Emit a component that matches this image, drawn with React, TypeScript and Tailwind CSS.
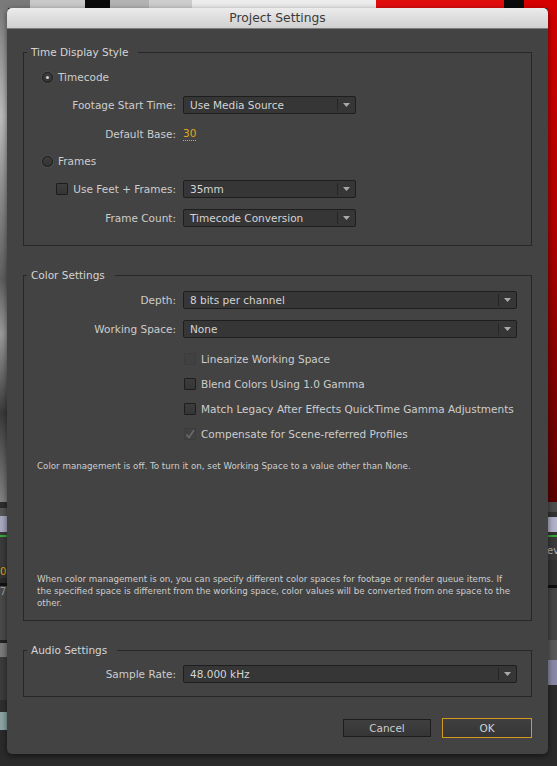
import type { ReactNode } from "react"

const label = "text-[10.5px] leading-[14px] text-[#cdcdcd]"
const small = "text-[8.7px] leading-[12px] text-[#cdcdcd]"

const topStrip = [
  { w: "w-[30px]", c: "bg-[#7a7a7a]" },
  { w: "w-[55px]", c: "bg-[#c9c9c9]" },
  { w: "w-[25px]", c: "bg-[#0b0b0b]" },
  { w: "w-[39px]", c: "bg-[#b3b3b3]" },
  { w: "w-[43px]", c: "bg-[#cdcdcd]" },
  { w: "w-[184px]", c: "bg-[#ececec]" },
  { w: "w-[128px]", c: "bg-[#e00d0d]" },
  { w: "w-[20px]", c: "bg-[#0b0b0b]" },
  { w: "flex-1", c: "bg-[#d60000]" },
]

const leftBands = [
  { h: "h-[494px]", c: "bg-[linear-gradient(180deg,#7c7c7c_0%,#bdbdbd_22%,#8c8c8c_38%,#5e5e5e_55%,#9b9b9b_66%,#3a3a3a_82%,#828282_100%)]" },
  { h: "h-[6px]", c: "bg-[#2e2e2e]" },
  { h: "h-[8px]", c: "bg-[#565656]" },
  { h: "h-[16px]", c: "bg-[#a9a9c1]" },
  { h: "h-[3px]", c: "bg-[#3a3a3a]" },
  { h: "h-[2px]", c: "bg-[#3aa63a]" },
  { h: "h-[29px]", c: "bg-[#3b3b3b]" },
  { h: "h-[12px]", c: "bg-[#353535]", t: "0", tc: "text-[#e0a51c]" },
  { h: "h-[5px]", c: "bg-[#2a2a2a]" },
  { h: "h-[3px]", c: "bg-[#111111]" },
  { h: "h-[54px]", c: "bg-[#4a4a4a]", t: "7", tc: "text-[#a0a0a0]" },
  { h: "h-[3px]", c: "bg-[#222222]" },
  { h: "h-[14px]", c: "bg-[#7b7b7b]" },
  { h: "h-[43px]", c: "bg-[#3c3c3c]" },
  { h: "h-[12px]", c: "bg-[#2f2f2f]" },
  { h: "h-[18px]", c: "bg-[#8ea5a5]" },
  { h: "flex-1", c: "bg-[#2b2b2b]" },
]

const rightBands = [
  { h: "h-[494px]", c: "bg-[linear-gradient(180deg,#d40000_0%,#b00000_45%,#5a0000_100%)]" },
  { h: "h-[10px]", c: "bg-[#4d4d4d]" },
  { h: "h-[5px]", c: "bg-[#333333]" },
  { h: "h-[15px]", c: "bg-[#b2b2c9]" },
  { h: "h-[3px]", c: "bg-[#333333]" },
  { h: "h-[2px]", c: "bg-[#3aa63a]" },
  { h: "h-[8px]", c: "bg-[#3a3a3a]" },
  { h: "h-[15px]", c: "bg-[#3a3a3a]", t: "ev", tc: "text-[#b5b5b5]" },
  { h: "h-[25px]", c: "bg-[#333333]" },
  { h: "h-[3px]", c: "bg-[#111111]" },
  { h: "h-[52px]", c: "bg-[#454545]" },
  { h: "h-[20px]", c: "bg-[#595959]" },
  { h: "h-[25px]", c: "bg-[#8a8aa8]" },
  { h: "flex-1", c: "bg-[#2b2b2b]" },
]

function Strip({ bands }: { bands: { h: string; c: string; t?: string; tc?: string }[] }) {
  return (
    <div className="flex flex-col h-full">
      {bands.map((b, i) => (
        <div key={i} className={`${b.h} ${b.c} overflow-hidden`}>
          {b.t && <span className={`block text-[10px] leading-[12px] ${b.tc}`}>{b.t}</span>}
        </div>
      ))}
    </div>
  )
}

function Group({ title, className = "", children }: { title: string; className?: string; children: ReactNode }) {
  return (
    <fieldset className={`border border-[#272727] ${className}`}>
      <legend className="ml-[3px] pl-[4px] pr-[10px] text-[10.5px] leading-[14px] text-[#d5d5d5]">{title}</legend>
      {children}
    </fieldset>
  )
}

function Dropdown({ value, wide }: { value: string; wide?: boolean }) {
  return (
    <div
      className={`${wide ? "w-[334px]" : "w-[173px]"} h-[18px] ml-[7px] flex items-center border border-[#1e1e1e] bg-[#363636] rounded-[2px]`}
    >
      <span className={`flex-1 pl-[6px] ${label} text-[#d4d4d4]`}>{value}</span>
      <span className="w-px h-[12px] bg-[#252525]" />
      <span className="w-[17px] flex justify-center">
        <svg width="7" height="4" viewBox="0 0 7 4">
          <path d="M0 0h7L3.5 4z" fill="#a9a9a9" />
        </svg>
      </span>
    </div>
  )
}

function Radio({ checked }: { checked?: boolean }) {
  return (
    <span className="w-[11px] h-[11px] rounded-full border border-[#1c1c1c] bg-gradient-to-b from-[#3e3e3e] to-[#333333] shadow-[0_0_0_1px_#4c4c4c] flex items-center justify-center">
      {checked && <span className="w-[3px] h-[3px] rounded-full bg-[#d2d2d2]" />}
    </span>
  )
}

function Checkbox({ checked, disabled }: { checked?: boolean; disabled?: boolean }) {
  return (
    <span
      className={`w-[12px] h-[12px] rounded-[1px] border flex items-center justify-center ${
        disabled ? "border-[#3c3c3c] bg-[#414141]" : "border-[#1d1d1d] bg-gradient-to-b from-[#3d3d3d] to-[#353535]"
      }`}
    >
      {checked && (
        <svg width="10" height="10" viewBox="0 0 10 10">
          <path d="M1.5 5.5 4 8.5 9 1" stroke={disabled ? "#6c6c6c" : "#d0d0d0"} strokeWidth="1.4" fill="none" />
        </svg>
      )}
    </span>
  )
}

function FieldRow({ name, children, className = "" }: { name: string; children: ReactNode; className?: string }) {
  return (
    <div className={`flex items-center h-[18px] ${className}`}>
      <span className={`w-[152px] text-right ${label}`}>{name}</span>
      {children}
    </div>
  )
}

function CheckRow({ text, checked, disabled, className = "" }: { text: string; checked?: boolean; disabled?: boolean; className?: string }) {
  return (
    <div className={`flex items-center gap-[5px] h-[16px] pl-[160px] ${className}`}>
      <Checkbox checked={checked} disabled={disabled} />
      <span className={`${label} ${disabled ? "text-[#717171]" : ""}`}>{text}</span>
    </div>
  )
}

export default function App() {
  return (
    <div className="relative w-[557px] h-[766px] overflow-hidden bg-[#2b2b2b] font-['DejaVu_Sans',sans-serif] flex flex-col">
      {/* desktop behind the dialog */}
      <div className="flex h-[8px]">
        {topStrip.map((s, i) => (
          <div key={i} className={`${s.w} ${s.c}`} />
        ))}
      </div>
      <div className="flex flex-1">
        <div className="w-[8px]">
          <Strip bands={leftBands} />
        </div>
        <div className="flex-1 bg-[#2b2b2b]" />
        <div className="w-[10px]">
          <Strip bands={rightBands} />
        </div>
      </div>

      {/* Project Settings dialog */}
      <div className="absolute left-[7px] top-[8px] w-[541px] h-[746px] flex flex-col rounded-[5px] overflow-hidden bg-[#434343] shadow-[0_2px_6px_rgba(0,0,0,0.55)]">
        <div className="h-[21px] flex items-center justify-center bg-gradient-to-b from-[#ececec] to-[#cfcfcf] border-b border-[#7c7c7c]">
          <span className="text-[12.3px] leading-[16px] text-[#3b3b3b]">Project Settings</span>
        </div>

        <div className="flex-1 flex flex-col pt-[16px] px-[16px]">
          <Group title="Time Display Style">
            <div className="pb-[18px]">
              <div className="mt-[10px] h-[16px] pl-[18px] flex items-center gap-[5px]">
                <Radio checked />
                <span className={label}>Timecode</span>
              </div>
              <FieldRow name="Footage Start Time:" className="mt-[11px]">
                <Dropdown value="Use Media Source" />
              </FieldRow>
              <FieldRow name="Default Base:" className="mt-[11px]">
                <span className="ml-[7px] text-[10.5px] leading-[13px] text-[#e2a71c] border-b border-dotted border-[#e2a71c]">30</span>
              </FieldRow>
              <div className="mt-[10px] h-[16px] pl-[18px] flex items-center gap-[5px]">
                <Radio />
                <span className={label}>Frames</span>
              </div>
              <div className="mt-[11px] flex items-center h-[18px]">
                <span className="w-[152px] flex items-center justify-end gap-[5px]">
                  <Checkbox />
                  <span className={label}>Use Feet + Frames:</span>
                </span>
                <Dropdown value="35mm" />
              </div>
              <FieldRow name="Frame Count:" className="mt-[11px]">
                <Dropdown value="Timecode Conversion" />
              </FieldRow>
            </div>
          </Group>

          <Group title="Color Settings" className="mt-[22px]">
            <div className="pb-[11px]">
              <FieldRow name="Depth:" className="mt-[9px]">
                <Dropdown value="8 bits per channel" wide />
              </FieldRow>
              <FieldRow name="Working Space:" className="mt-[11px]">
                <Dropdown value="None" wide />
              </FieldRow>
              <CheckRow text="Linearize Working Space" disabled className="mt-[13px]" />
              <CheckRow text="Blend Colors Using 1.0 Gamma" className="mt-[9px]" />
              <CheckRow text="Match Legacy After Effects QuickTime Gamma Adjustments" className="mt-[9px]" />
              <CheckRow text="Compensate for Scene-referred Profiles" checked disabled className="mt-[9px]" />
              <p className={`mt-[18px] pl-[13px] ${small}`}>
                Color management is off. To turn it on, set Working Space to a value other than None.
              </p>
              <p className={`mt-[101px] pl-[13px] pr-[12px] ${small}`}>
                When color management is on, you can specify different color spaces for footage or render queue items. If
                <br />
                the specified space is different from the working space, color values will be converted from one space to the
                <br />
                other.
              </p>
            </div>
          </Group>

          <Group title="Audio Settings" className="mt-[22px]">
            <div className="pb-[13px]">
              <FieldRow name="Sample Rate:" className="mt-[8px]">
                <Dropdown value="48.000 kHz" wide />
              </FieldRow>
            </div>
          </Group>

          <div className="mt-[21px] flex justify-end items-center gap-[11px]">
            <button className={`w-[88px] h-[18px] border border-[#1d1d1d] bg-gradient-to-b from-[#3f3f3f] to-[#363636] ${label} text-[#c6c6c6]`}>
              Cancel
            </button>
            <button className={`w-[90px] h-[20px] border border-[#d49a1c] bg-gradient-to-b from-[#3f3f3f] to-[#363636] ${label} text-[#d2d2d2]`}>
              OK
            </button>
          </div>
        </div>
      </div>
    </div>
  )
}
